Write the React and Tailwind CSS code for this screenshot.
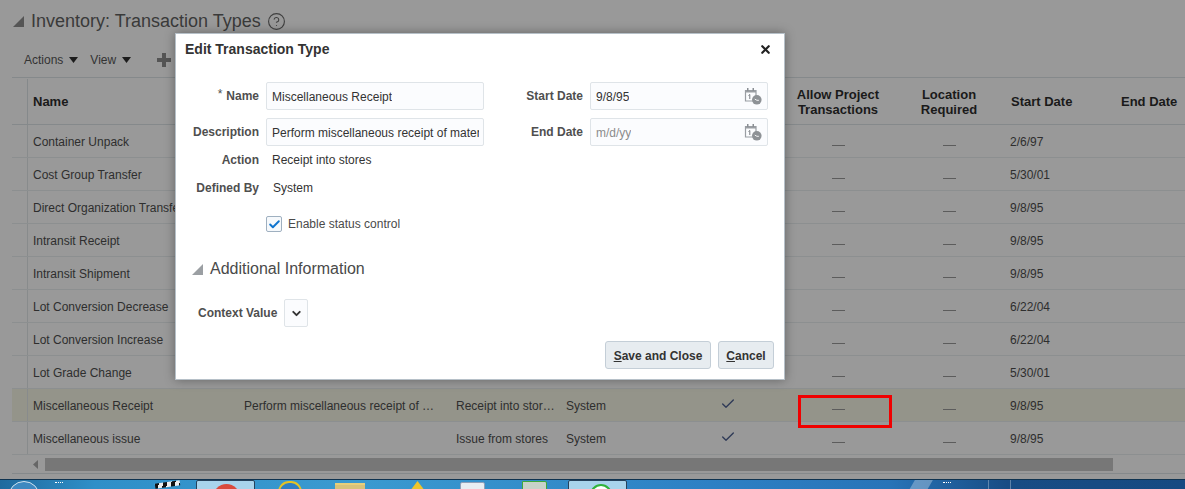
import { Check, ChevronDown, X, HelpCircle } from "lucide-react";

const cols = "ml-[12px] grid grid-cols-[16px_210px_212px_110px_112px_110px_112px_110px_111px_70px]";

const rows = [
  { name: "Container Unpack", start: "2/6/97" },
  { name: "Cost Group Transfer", start: "5/30/01" },
  { name: "Direct Organization Transfer", start: "9/8/95" },
  { name: "Intransit Receipt", start: "9/8/95" },
  { name: "Intransit Shipment", start: "9/8/95" },
  { name: "Lot Conversion Decrease", start: "6/22/04" },
  { name: "Lot Conversion Increase", start: "6/22/04" },
  { name: "Lot Grade Change", start: "5/30/01" },
  {
    name: "Miscellaneous Receipt",
    desc: "Perform miscellaneous receipt of …",
    action: "Receipt into stor…",
    by: "System",
    check: true,
    start: "9/8/95",
    active: true,
  },
  { name: "Miscellaneous issue", action: "Issue from stores", by: "System", check: true, start: "9/8/95" },
];

const Dash = () => <div className="mx-auto mt-[10px] h-px w-[13px] bg-[#5c5c5c]" />;

const Triangle = ({ className }) => (
  <svg viewBox="0 0 12 12" className={className}>
    <path d="M12 0V12H0Z" fill="currentColor" />
  </svg>
);

const Caret = () => (
  <svg viewBox="0 0 9 6" className="h-[6px] w-[9px] text-[#1c1c1c]">
    <path d="M0 0H9L4.5 6Z" fill="currentColor" />
  </svg>
);

const CalendarIcon = () => (
  <svg viewBox="0 0 18 18" className="h-[18px] w-[18px]">
    <path d="M1.5 3.5H12V14H1.5Z" fill="none" stroke="#9a9ea3" strokeWidth="1.2" />
    <path d="M1 3H12V5.5H1Z" fill="#9a9ea3" />
    <path d="M3 1H4.5V4H3ZM8.5 1H10V4H8.5Z" fill="#8a8e93" />
    <path d="M4.5 8.5L5.8 7.5V12" fill="none" stroke="#777b80" strokeWidth="1" />
    <circle cx="12.8" cy="12.8" r="4.8" fill="#8e9296" />
    <path d="M10.8 12.1L12.9 13.3H14.9" fill="none" stroke="#fff" strokeWidth="0.9" />
  </svg>
);

function Row({ row }) {
  return (
    <div
      className={`${cols} h-[33px] border-b border-[#8c8f90] text-[12px] leading-[35px] text-[#2e2e2e] ${
        row.active ? "bg-[#94948a]" : ""
      }`}
    >
      <div className="h-[32px] border-r border-[#888b8c]" />
      <div className="truncate pl-[5px]">{row.name}</div>
      <div className="whitespace-nowrap pl-[6px]">{row.desc}</div>
      <div className="whitespace-nowrap pl-[6px]">{row.action}</div>
      <div className="pl-[6px]">{row.by}</div>
      <div className="flex justify-center pl-[1px] pt-[7px]">
        {row.check && <Check className="h-[16px] w-[16px] text-[#2f3a57]" strokeWidth={2} />}
      </div>
      <div className="pt-[10px]">
        <Dash />
      </div>
      <div className="pt-[10px]">
        <Dash />
      </div>
      <div className="pl-[6px]">{row.start}</div>
      <div />
    </div>
  );
}

function Field({ value, placeholder, icon, className }) {
  return (
    <div
      className={`flex h-[28px] items-center justify-between rounded-[2px] border border-[#dfe4e8] bg-[#fbfcfe] pl-[5px] text-[12px] ${
        icon ? "pr-[5px]" : "pr-[4px]"
      } ${className}`}
    >
      <span className={`min-w-0 overflow-hidden whitespace-nowrap pt-[1px] ${placeholder ? "text-[#8b8b8b]" : "text-[#333]"}`}>
        {value || placeholder}
      </span>
      {icon && <CalendarIcon />}
    </div>
  );
}

const labelCls = "text-right text-[12px] font-bold text-[#4f4f4f]";

function Modal() {
  return (
    <div className="absolute left-[175px] top-[33px] flex h-[347px] w-[610px] flex-col border border-[#b6c0c8] bg-white shadow-[0_0_10px_rgba(0,0,0,0.35)]">
      <div className="flex items-center justify-between pl-[9px] pr-[12px] pt-[7px]">
        <h2 className="text-[14px] font-bold leading-[16px] text-[#333]">Edit Transaction Type</h2>
        <X className="h-[13px] w-[13px] text-[#222]" strokeWidth={4} />
      </div>

      <div className="mt-[25px] flex">
        <div className="w-[308px]">
          <div className="grid grid-cols-[83px_218px] items-center gap-x-[7px] gap-y-[8px]">
            <div className={labelCls}>
              <span className="relative -top-[2px] mr-[4px] font-normal">*</span>Name
            </div>
            <Field value="Miscellaneous Receipt" />
            <div className={labelCls}>Description</div>
            <Field value="Perform miscellaneous receipt of material" />
          </div>
          <div className="mt-[7px] grid grid-cols-[83px_218px] gap-x-[7px] gap-y-[14px] text-[12px] leading-[14px]">
            <div className={labelCls}>Action</div>
            <div className="pl-[6px] text-[#333]">Receipt into stores</div>
            <div className={labelCls}>Defined By</div>
            <div className="pl-[7px] text-[#333]">System</div>
          </div>
        </div>
        <div className="ml-[14px] grid w-[270px] grid-cols-[85px_178px] items-center gap-x-[7px] gap-y-[8px] self-start">
          <div className={labelCls}>Start Date</div>
          <Field value="9/8/95" icon />
          <div className={labelCls}>End Date</div>
          <Field placeholder="m/d/yy" icon />
        </div>
      </div>

      <div className="mt-[20px] flex items-center gap-[6px] pl-[90px]">
        <div className="flex h-[16px] w-[16px] items-center justify-center rounded-[2px] border border-[#9fb0c0] bg-[#f6f9fc]">
          <Check className="h-[13px] w-[13px] text-[#0d74cf]" strokeWidth={3.5} />
        </div>
        <span className="text-[12px] text-[#4a4a4a]">Enable status control</span>
      </div>

      <div className="mt-[26px] flex items-center gap-[7px] pl-[16px]">
        <Triangle className="h-[11px] w-[11px] text-[#9b9fa3]" />
        <span className="text-[16px] leading-[20px] text-[#4a4a4a]">Additional Information</span>
      </div>

      <div className="mt-[20px] flex items-center gap-[7px] pl-[22px]">
        <span className={labelCls}>Context Value</span>
        <div className="flex h-[28px] w-[24px] items-center justify-center rounded-[2px] border border-[#dfe4e8] bg-[#fbfcfe]">
          <ChevronDown className="h-[13px] w-[13px] text-[#333]" strokeWidth={3.5} />
        </div>
      </div>

      <div className="mt-auto flex justify-end gap-[7px] pb-[10px] pr-[10px]">
        <button className="h-[28px] w-[106px] rounded-[3px] border border-[#c4ced7] bg-[#e7ecf0] pt-[1px] text-[12px] font-bold text-[#333]">
          <span className="underline">S</span>ave and Close
        </button>
        <button className="h-[28px] w-[56px] rounded-[3px] border border-[#c4ced7] bg-[#e7ecf0] pt-[1px] text-[12px] font-bold text-[#333]">
          <span className="underline">C</span>ancel
        </button>
      </div>
    </div>
  );
}

function Taskbar() {
  return (
    <div className="flex h-[10px] items-start overflow-hidden border-t border-[#0f3350] bg-[linear-gradient(90deg,#1f6a9e_0%,#2f8fc8_8%,#3a9ad0_30%,#2d80c4_60%,#2874b8_75%,#184c84_85%,#164a82_100%)]">
      <div className="ml-[8px] mt-[1px] h-[32px] w-[32px] shrink-0 rounded-full border border-[#cfe3f0] bg-[#3d88c0]" />
      <div className="ml-[15px] mt-[2px] h-[2px] w-[8px] border-t border-dotted border-white" />
      <div className="ml-[92px] mt-[2px] h-[5px] w-[25px] -rotate-[8deg] bg-[repeating-linear-gradient(110deg,#111_0,#111_4px,#eee_4px,#eee_8px)]" />
      <div className="ml-[16px] h-[10px] w-[59px] rounded-t-[2px] border border-[#26425c] bg-[#a9d4ec] pl-[16px]">
        <div className="mt-[3px] h-[27px] w-[27px] rounded-full bg-[#d94a3c]" />
      </div>
      <div className="ml-[23px] mt-[1px] h-[22px] w-[24px] rounded-full border-2 border-[#e5c323] bg-[#2f7fc4]" />
      <div className="ml-[33px] mt-[3px] h-[8px] w-[30px] border-t-2 border-[#e8cf7a] bg-[#d8c27a]" />
      <div className="ml-[45px] mt-[1px] h-[10px] w-[15px] bg-[#efc52a] [clip-path:polygon(50%_0,100%_100%,0_100%)]" />
      <div className="ml-[35px] mt-[2px] h-[8px] w-[25px] rounded-t-[2px] border border-[#8f9fb8] bg-[#e8edf2]" />
      <div className="ml-[37px] mt-[1px] h-[9px] w-[25px] rounded-tr-[2px] border border-[#3fa93a] bg-[#c8d2c8]" />
      <div className="ml-[21px] h-[10px] w-[59px] rounded-t-[2px] border border-[#26425c] bg-[#a9d4ec] pl-[21px]">
        <div className="mt-[3px] h-[22px] w-[22px] rounded-full border-2 border-[#30b33b] bg-white" />
      </div>
      <div className="ml-[285px] h-[10px] w-[18px] -skew-x-[30deg] bg-white/30" />
      <div className="ml-[13px] mt-[2px] h-[2px] w-[8px] border-t border-dotted border-white" />
      <div className="ml-[37px] h-[10px] w-px bg-white/30" />
      <div className="ml-[21px] h-[10px] w-px bg-white/30" />
    </div>
  );
}

export default function App() {
  return (
    <div className="relative h-[489px] w-[1185px] overflow-hidden bg-[#999999] font-['Liberation_Sans',Arial,sans-serif]">
      <div className="flex h-[479px] flex-col">
        <div className="flex h-[43px] items-center pb-[1px] pl-[13px]">
          <Triangle className="h-[11px] w-[11px] text-[#555]" />
          <h1 className="ml-[7px] text-[18px] leading-[22px] text-[#3a3a3a]">Inventory: Transaction Types</h1>
          <HelpCircle className="ml-[6px] h-[19px] w-[19px] text-[#3f3f3f]" strokeWidth={1.4} />
        </div>

        <div className="ml-[12px] flex h-[35px] items-center border-b border-[#85898b] pl-[12px] text-[12px] text-[#333]">
          <span>Actions</span>
          <span className="ml-[6px]">
            <Caret />
          </span>
          <span className="ml-[12px]">View</span>
          <span className="ml-[6px]">
            <Caret />
          </span>
          <svg viewBox="0 0 14 14" className="ml-[26px] h-[14px] w-[14px] text-[#555]">
            <path d="M5 0H9V5H14V9H9V14H5V9H0V5H5Z" fill="currentColor" />
          </svg>
        </div>

        <div className={`${cols} h-[47px] items-center border-b border-[#85898b] pt-[1px] text-[13px] font-bold leading-[15px] text-[#1a1a1a]`}>
          <div className="self-stretch border-r border-[#85898b]" />
          <div className="pl-[5px]">Name</div>
          <div />
          <div />
          <div />
          <div />
          <div className="text-center">
            Allow Project
            <br />
            Transactions
          </div>
          <div className="text-center">
            Location
            <br />
            Required
          </div>
          <div className="pl-[7px]">Start Date</div>
          <div className="pl-[6px]">End Date</div>
        </div>

        {rows.map((row) => (
          <Row key={row.name} row={row} />
        ))}

        <div className="ml-[33px] mt-[3px] flex h-[13px] items-center">
          <svg viewBox="0 0 5 9" className="h-[9px] w-[5px] text-[#666]">
            <path d="M5 0V9L0 4.5Z" fill="currentColor" />
          </svg>
          <div className="ml-[7px] h-full w-[1068px] bg-[#777777]" />
        </div>
        <div className="ml-[12px] mt-[2px] h-px bg-[#85898b]" />
      </div>

      <Taskbar />
      <Modal />
      <div className="absolute left-[798px] top-[395px] h-[33px] w-[94px] border-[3px] border-[#f00000]" />
    </div>
  );
}
